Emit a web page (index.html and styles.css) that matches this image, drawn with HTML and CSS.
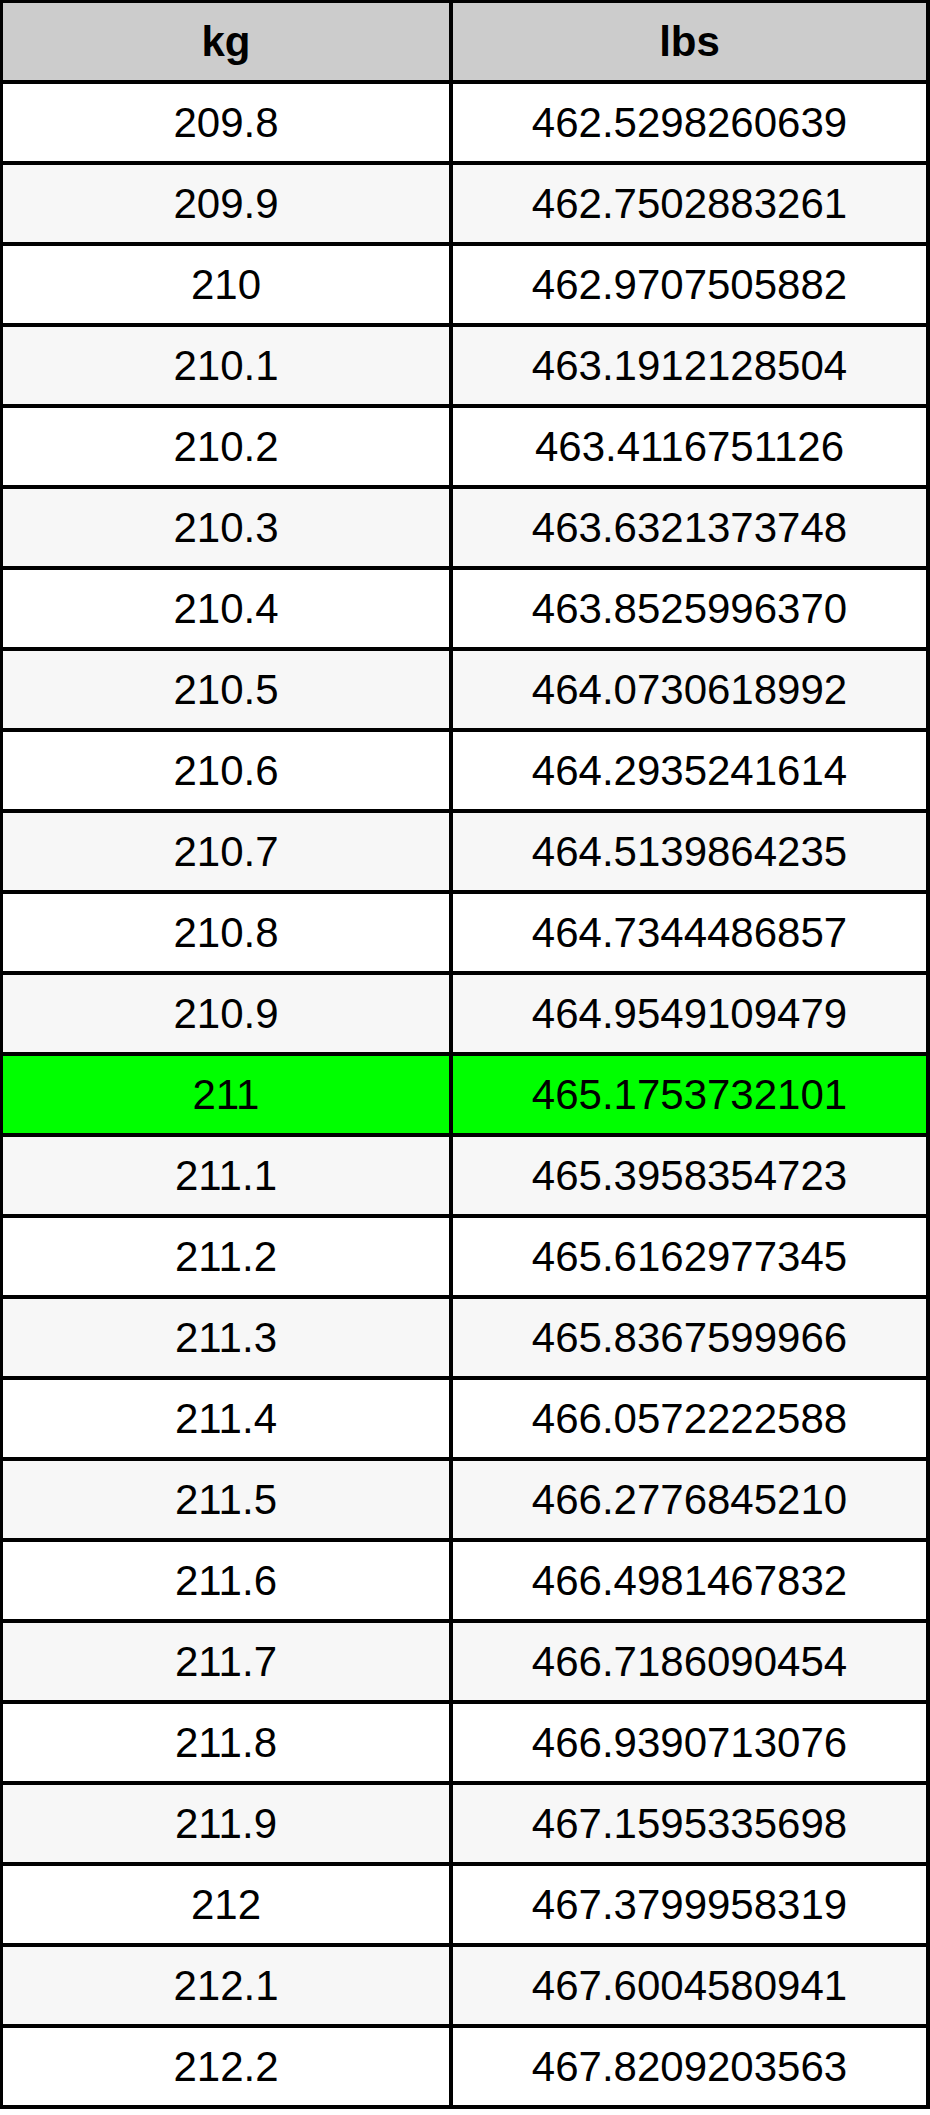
FILE: index.html
```html
<!DOCTYPE html>
<html>
<head>
<meta charset="utf-8">
<link rel="stylesheet" href="styles.css">
</head>
<body>
<div class="conv">
  <div class="cell head left">kg</div><div class="cell head right">lbs</div>
  <div class="cell left">209.8</div><div class="cell right">462.5298260639</div>
  <div class="cell left alt">209.9</div><div class="cell right alt">462.7502883261</div>
  <div class="cell left">210</div><div class="cell right">462.9707505882</div>
  <div class="cell left alt">210.1</div><div class="cell right alt">463.1912128504</div>
  <div class="cell left">210.2</div><div class="cell right">463.4116751126</div>
  <div class="cell left alt">210.3</div><div class="cell right alt">463.6321373748</div>
  <div class="cell left">210.4</div><div class="cell right">463.8525996370</div>
  <div class="cell left alt">210.5</div><div class="cell right alt">464.0730618992</div>
  <div class="cell left">210.6</div><div class="cell right">464.2935241614</div>
  <div class="cell left alt">210.7</div><div class="cell right alt">464.5139864235</div>
  <div class="cell left">210.8</div><div class="cell right">464.7344486857</div>
  <div class="cell left alt">210.9</div><div class="cell right alt">464.9549109479</div>
  <div class="cell left hl">211</div><div class="cell right hl">465.1753732101</div>
  <div class="cell left alt">211.1</div><div class="cell right alt">465.3958354723</div>
  <div class="cell left">211.2</div><div class="cell right">465.6162977345</div>
  <div class="cell left alt">211.3</div><div class="cell right alt">465.8367599966</div>
  <div class="cell left">211.4</div><div class="cell right">466.0572222588</div>
  <div class="cell left alt">211.5</div><div class="cell right alt">466.2776845210</div>
  <div class="cell left">211.6</div><div class="cell right">466.4981467832</div>
  <div class="cell left alt">211.7</div><div class="cell right alt">466.7186090454</div>
  <div class="cell left">211.8</div><div class="cell right">466.9390713076</div>
  <div class="cell left alt">211.9</div><div class="cell right alt">467.1595335698</div>
  <div class="cell left">212</div><div class="cell right">467.3799958319</div>
  <div class="cell left alt">212.1</div><div class="cell right alt">467.6004580941</div>
  <div class="cell left">212.2</div><div class="cell right">467.8209203563</div>
</div>
</body>
</html>
```

FILE: styles.css
```css
html, body {
  margin: 0;
  padding: 0;
  background: #ffffff;
}

.conv {
  width: 930px;
  box-sizing: border-box;
  display: grid;
  grid-template-columns: 450px 477px;
  border-top: 3px solid #000;
  border-left: 3px solid #000;
  font-family: "Liberation Sans", Arial, sans-serif;
  font-size: 42px;
  color: #000;
}

.cell {
  height: 81px;
  box-sizing: border-box;
  border-bottom: 4px solid #000;
  border-right: 4px solid #000;
  display: flex;
  align-items: center;
  justify-content: center;
  background: #ffffff;
}

.head {
  height: 81px;
  background: #cccccc;
  font-weight: bold;
}

.conv > .head:first-child,
.conv > .head:nth-child(2) {
  height: 81px;
}

.alt {
  background: #f7f7f7;
}

.hl {
  background: #00ff00;
}
```
